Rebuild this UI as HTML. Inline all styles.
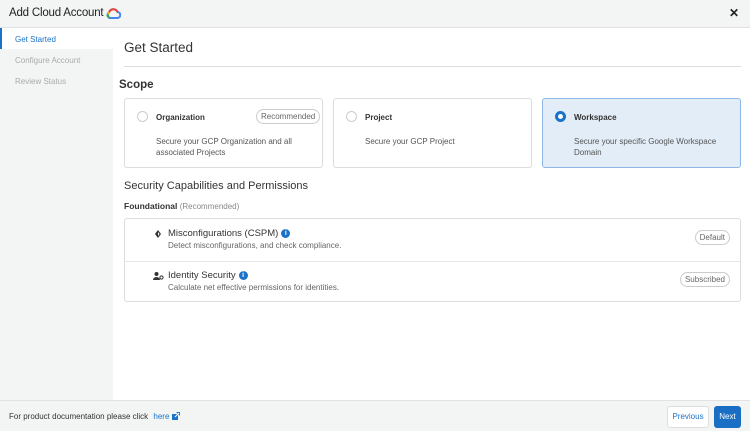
<!DOCTYPE html>
<html><head><style>
*{box-sizing:border-box;margin:0;padding:0}
body{width:750px;height:431px;overflow:hidden;font-family:"Liberation Sans",sans-serif;background:#f3f4f4;position:relative;color:#333}
.hdr{position:absolute;left:0;top:0;width:750px;height:28px;background:#f3f4f4;border-bottom:1px solid #e2e2e2}
.hdr .t{position:absolute;left:9px;top:7px;font-size:11.5px;letter-spacing:-0.2px;color:#222}
.x{position:absolute;right:11px;top:6px;font-size:12px;color:#222;font-weight:bold}
.side{position:absolute;left:0;top:28px;width:113px;height:372px;background:#f3f4f4}
.side div{height:21px;font-size:8px;padding:7px 0 0 15px;color:#aaa}
.side .a{background:#fff;color:#1a73c8;border-left:2px solid #1a73c8;padding-left:13px}
.main{position:absolute;left:113px;top:28px;width:637px;height:372px;background:#fff}
.abs{position:absolute}
.card{position:absolute;top:70px;height:70px;border:1px solid #ddd;border-radius:3px;background:#fff}
.card .r{position:absolute;left:12px;top:12px;width:11px;height:11px;border:1px solid #ccc;border-radius:50%}
.card .n{position:absolute;left:31px;top:14px;font-size:8px;font-weight:bold;color:#333}
.card .d{position:absolute;left:31px;top:37px;font-size:8px;color:#555;line-height:11px;width:150px}
.pill{position:absolute;border:1px solid #ccc;border-radius:8px;font-size:8px;color:#666;padding:2px 4px;background:#fff}
.info{display:inline-block;width:9px;height:9px;border-radius:50%;background:#1a73c8;color:#fff;font-size:7px;text-align:center;line-height:9px;font-weight:bold;vertical-align:1px;margin-left:3px}
.foot{position:absolute;left:0;top:400px;width:750px;height:31px;background:#f3f4f4;border-top:1px solid #e2e2e2}
</style></head><body>
<div class="hdr"><span class="t">Add Cloud Account</span>
<svg class="abs" style="left:106px;top:8px" width="15" height="11" viewBox="0 0 15 11"><path d="M4 10H11A3 3 0 0 0 11.5 4A4.5 4.5 0 0 0 3 4.5A3 3 0 0 0 4 10Z" fill="none" stroke="#4285f4" stroke-width="2"/><path d="M3 4.5A4.5 4.5 0 0 1 11.5 4" fill="none" stroke="#ea4335" stroke-width="2"/><path d="M4 10A3 3 0 0 1 2 6" fill="none" stroke="#34a853" stroke-width="2"/><path d="M2 6A3 3 0 0 1 3.5 4.6" fill="none" stroke="#fbbc05" stroke-width="2"/></svg>
<span class="x">✕</span></div>
<div class="side"><div class="a">Get Started</div><div>Configure Account</div><div>Review Status</div></div>
<div class="main">
<div class="abs" style="left:11px;top:12px;font-size:13.5px;color:#333">Get Started</div>
<div class="abs" style="left:11px;top:38px;width:617px;border-top:1px solid #ddd"></div>
<div class="abs" style="left:6px;top:51px;font-size:11.5px;font-weight:bold;color:#333">Scope</div>
<div class="card" style="left:11px;width:199px"><div class="r"></div><div class="n">Organization</div><div class="pill" style="left:131px;top:10px">Recommended</div><div class="d">Secure your GCP Organization and all associated Projects</div></div>
<div class="card" style="left:220px;width:199px"><div class="r"></div><div class="n">Project</div><div class="d">Secure your GCP Project</div></div>
<div class="card" style="left:429px;width:199px;background:#e2edf8;border-color:#8db8e6"><div class="r" style="border:3px solid #1a73c8;background:#fff"></div><div class="n">Workspace</div><div class="d" style="width:160px">Secure your specific Google Workspace Domain</div></div>
<div class="abs" style="left:11px;top:152px;font-size:11px;color:#333">Security Capabilities and Permissions</div>
<div class="abs" style="left:11px;top:173px;font-size:8.5px;font-weight:bold;color:#333">Foundational <span style="font-weight:normal;color:#888;font-size:8px">(Recommended)</span></div>
<div class="abs" style="left:11px;top:190px;width:617px;height:84px;border:1px solid #ddd;border-radius:3px">
<div class="abs" style="left:0;top:42px;width:615px;border-top:1px solid #e6e6e6"></div>
<svg class="abs" style="left:29px;top:11px" width="8" height="8" viewBox="0 0 8 8"><path d="M4 0L7 4L4 8L1 4Z" fill="#333"/><path d="M4 2L5.5 4L4 6Z" fill="#fff"/></svg>
<div class="abs" style="left:43px;top:9px;font-size:9.5px;color:#333">Misconfigurations (CSPM)<span class="info">i</span></div>
<div class="abs" style="left:43px;top:22px;font-size:8px;color:#666">Detect misconfigurations, and check compliance.</div>
<div class="pill" style="right:10px;top:11px">Default</div>
<svg class="abs" style="left:28px;top:53px" width="11" height="8" viewBox="0 0 11 8"><circle cx="3.5" cy="2" r="2" fill="#333"/><path d="M0 8A3.5 3 0 0 1 7 8Z" fill="#333"/><circle cx="8.5" cy="5.5" r="1.6" fill="none" stroke="#333" stroke-width="1"/></svg>
<div class="abs" style="left:43px;top:51px;font-size:9.5px;color:#333">Identity Security<span class="info">i</span></div>
<div class="abs" style="left:43px;top:64px;font-size:8px;color:#666">Calculate net effective permissions for identities.</div>
<div class="pill" style="right:10px;top:53px">Subscribed</div>
</div>
</div>
<div class="foot">
<div class="abs" style="left:9px;top:11px;font-size:8px;color:#333">For product documentation please click <span style="color:#1a73c8;margin-left:3px">here</span> <svg width="8" height="8" viewBox="0 0 8 8" style="vertical-align:-1px"><rect x="0" y="2" width="6" height="6" fill="#1a73c8"/><path d="M4 0H8V4Z" fill="#1a73c8"/><path d="M3 5L7 1" stroke="#fff" stroke-width="1"/></svg></div>
<div class="abs" style="left:667px;top:5px;width:42px;height:22px;border:1px solid #ddd;border-radius:3px;background:#fff;color:#1a73c8;font-size:8px;text-align:center;line-height:20px">Previous</div>
<div class="abs" style="left:714px;top:5px;width:27px;height:22px;border-radius:3px;background:#1a6fc4;color:#fff;font-size:8px;text-align:center;line-height:22px">Next</div>
</div>
</body></html>
